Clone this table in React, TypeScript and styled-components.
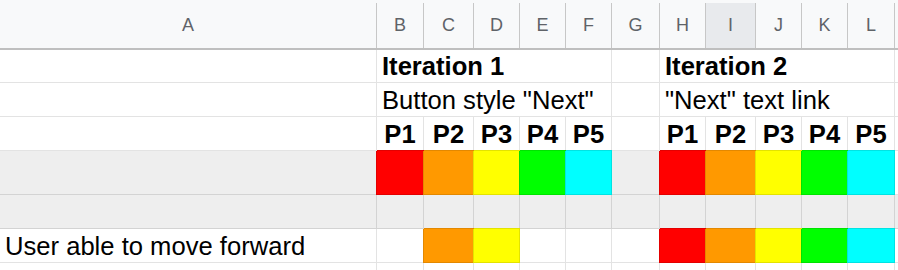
import styled, { createGlobalStyle } from "styled-components";

const GlobalStyle = createGlobalStyle`
  html, body {
    margin: 0;
    padding: 0;
    background: #ffffff;
    overflow: hidden;
  }
  body {
    font-family: "Liberation Sans", Arial, Helvetica, sans-serif;
  }
`;

// widths measured off the sheet, last column is the sliver of M
const COLS = "377px 47px 50px 46px 46px 46px 48px 46px 50px 46px 46px 47px 1fr";
const LINE = "rgba(0, 0, 0, 0.11)";
const GRAY = "#eeeeee";

const RED = "#ff0000";
const ORANGE = "#ff9900";
const YELLOW = "#ffff00";
const GREEN = "#00ff00";
const CYAN = "#00ffff";

const Sheet = styled.div`
  width: 898px;
  height: 270px;
  overflow: hidden;
  background: #ffffff;
`;

const HeaderRow = styled.div`
  display: grid;
  grid-template-columns: ${COLS};
  height: 50px;
  box-sizing: border-box;
  padding-top: 3px;
  background: #f8f9fa;
  border-bottom: 2px solid #bfbfbf;
`;

const ColHead = styled.div<{ $active?: boolean }>`
  display: flex;
  align-items: center;
  justify-content: center;
  border-right: 1px solid #c7c7c7;
  background: ${p => (p.$active ? "#e8eaed" : "transparent")};
  color: #5f6368;
  font-size: 18px;

  &:last-child {
    border-right: none;
  }
`;

const Row = styled.div<{ $height: number }>`
  display: grid;
  grid-template-columns: ${COLS};
  height: ${p => p.$height}px;
`;

const Cell = styled.div<{ $bg?: string; $fill?: string; $bold?: boolean; $center?: boolean; $span?: number }>`
  display: flex;
  align-items: flex-end;
  justify-content: ${p => (p.$center ? "center" : "flex-start")};
  grid-column: ${p => (p.$span ? `span ${p.$span}` : "auto")};
  box-sizing: border-box;
  min-width: 0;
  padding: 0 5px 2px;
  border-right: 1px solid ${LINE};
  border-bottom: 1px solid ${LINE};
  background: ${p => p.$fill || p.$bg || "#ffffff"};
  box-shadow: ${p =>
    p.$fill
      ? `-1px 0 0 ${LINE}, 0 -1px 0 ${LINE}, -1px 0 0 ${p.$fill}, 0 -1px 0 ${p.$fill}`
      : "none"};
  color: #000000;
  font-size: 25.6px;
  line-height: 1;
  font-weight: ${p => (p.$bold ? 700 : 400)};
  white-space: nowrap;
  overflow: visible;
`;

const letters = ["A", "B", "C", "D", "E", "F", "G", "H", "I", "J", "K", "L", ""];
const people = ["P1", "P2", "P3", "P4", "P5"];

// one entry per column B..L, "" = no fill
const ratingRow = [RED, ORANGE, YELLOW, GREEN, CYAN, "", RED, ORANGE, YELLOW, GREEN, CYAN];
const forwardRow = ["", ORANGE, YELLOW, "", "", "", RED, ORANGE, YELLOW, GREEN, CYAN];

export default function App() {
  return (
    <Sheet>
      <GlobalStyle />
      <HeaderRow>
        {letters.map((l, i) => (
          <ColHead key={i} $active={l === "I"}>
            {l}
          </ColHead>
        ))}
      </HeaderRow>

      <Row $height={33}>
        <Cell />
        <Cell $bold $span={5}>Iteration 1</Cell>
        <Cell />
        <Cell $bold $span={5}>Iteration 2</Cell>
        <Cell />
      </Row>

      <Row $height={34}>
        <Cell />
        <Cell $span={5}>Button style "Next"</Cell>
        <Cell />
        <Cell $span={5}>"Next" text link</Cell>
        <Cell />
      </Row>

      <Row $height={34}>
        <Cell />
        {people.map(p => (
          <Cell key={"a" + p} $bold $center>
            {p}
          </Cell>
        ))}
        <Cell />
        {people.map(p => (
          <Cell key={"b" + p} $bold $center>
            {p}
          </Cell>
        ))}
        <Cell />
      </Row>

      <Row $height={44}>
        <Cell $bg={GRAY} />
        {ratingRow.map((c, i) => (
          <Cell key={i} $fill={c || undefined} $bg={GRAY} />
        ))}
        <Cell />
      </Row>

      <Row $height={34}>
        <Cell $bg={GRAY} />
        {ratingRow.map((_, i) => (
          <Cell key={i} $bg={GRAY} />
        ))}
        <Cell $bg={GRAY} />
      </Row>

      <Row $height={34}>
        <Cell>User able to move forward</Cell>
        {forwardRow.map((c, i) => (
          <Cell key={i} $fill={c || undefined} />
        ))}
        <Cell />
      </Row>

      <Row $height={10}>
        {letters.map((_, i) => (
          <Cell key={i} />
        ))}
      </Row>
    </Sheet>
  );
}
